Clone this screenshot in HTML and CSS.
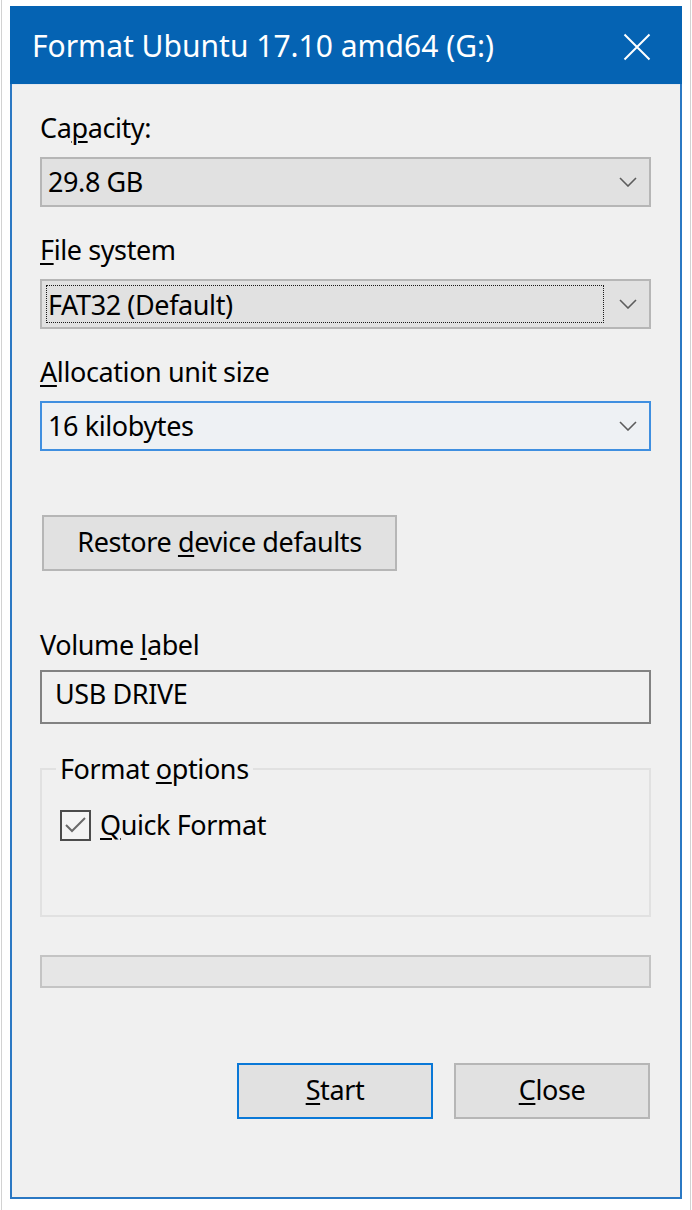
FILE: index.html
```html
<!DOCTYPE html>
<html>
<head>
<meta charset="utf-8">
<link rel="stylesheet" href="styles.css">
</head>
<body>
<div class="screen">
  <div class="window">
    <div class="titlebar">
      <span class="title">Format Ubuntu 17.10 amd64 (G:)</span>
      <svg class="close" width="28" height="28" viewBox="0 0 28 28"><path d="M1.5 1.5L26.5 26.5M26.5 1.5L1.5 26.5" stroke="#fff" stroke-width="2" fill="none"/></svg>
    </div>
    <div class="body">
      <div class="label first">Ca<u>p</u>acity:</div>
      <div class="combo">
        <span class="value">29.8 GB</span>
        <svg class="chev" width="18" height="10" viewBox="0 0 18 10"><path d="M1 1L9 9L17 1" stroke="#5c5c5c" stroke-width="1.6" fill="none"/></svg>
      </div>
      <div class="label"><u>F</u>ile system</div>
      <div class="combo">
        <span class="value focus">FAT32 (Default)</span>
        <svg class="chev" width="18" height="10" viewBox="0 0 18 10"><path d="M1 1L9 9L17 1" stroke="#5c5c5c" stroke-width="1.6" fill="none"/></svg>
      </div>
      <div class="label"><u>A</u>llocation unit size</div>
      <div class="combo hover">
        <span class="value">16 kilobytes</span>
        <svg class="chev" width="18" height="10" viewBox="0 0 18 10"><path d="M1 1L9 9L17 1" stroke="#5c5c5c" stroke-width="1.6" fill="none"/></svg>
      </div>
      <button class="btn restore">Restore <u>d</u>evice defaults</button>
      <div class="label vol">Volume <u>l</u>abel</div>
      <div class="textbox">USB DRIVE</div>
      <fieldset class="group">
        <legend>Format <u>o</u>ptions</legend>
        <div class="check-row">
          <span class="checkbox"><svg width="23" height="18" viewBox="0 0 23 18"><path d="M2 9L8 15L21 2" stroke="#6a6a6a" stroke-width="2" fill="none"/></svg></span>
          <span class="check-label"><u>Q</u>uick Format</span>
        </div>
      </fieldset>
      <div class="progress"></div>
      <div class="actions">
        <button class="btn action default"><u>S</u>tart</button>
        <button class="btn action"><u>C</u>lose</button>
      </div>
    </div>
  </div>
</div>
</body>
</html>
```

FILE: styles.css
```css
html, body {
  margin: 0;
  padding: 0;
  background: #ffffff;
}

body {
  font-family: "Noto Sans", "Open Sans", sans-serif;
  color: #000;
}

.screen {
  margin: 0 1px;
  height: 1210px;
  box-sizing: border-box;
  border-left: 1px solid #d2d2d2;
  border-right: 1px solid #d2d2d2;
  padding: 6px 0 0 8px;
}

.window {
  width: 672px;
  height: 1193px;
  box-sizing: border-box;
  border: 2px solid #2b78c3;
  border-top: none;
  background: #f0f0f0;
  display: flex;
  flex-direction: column;
}

.titlebar {
  height: 78px;
  box-sizing: border-box;
  margin: 0 -2px;
  background: #0563b3;
  display: flex;
  align-items: flex-start;
  padding: 20px 31px 0 22px;
}

.title {
  flex: 1;
  color: #fff;
  font-size: 30px;
  line-height: 40px;
  white-space: nowrap;
}

.close {
  margin-top: 7px;
}

.body {
  flex: 1;
  padding: 0 29px 0 28px;
  display: flex;
  flex-direction: column;
  font-size: 27px;
  letter-spacing: -0.4px;
  border-top: 1px solid #e4e8ee;
}

u {
  text-decoration: underline;
  text-decoration-thickness: 2px;
  text-underline-offset: 3px;
}

.label {
  line-height: 32px;
  height: 32px;
  margin-top: 27px;
  white-space: nowrap;
}

.combo {
  margin-top: 13px;
  height: 50px;
  box-sizing: border-box;
  border: 2px solid #b6b6b6;
  background: #e1e1e1;
  display: flex;
  align-items: center;
  padding: 0 12px 0 4px;
}

.combo .value {
  flex: 1;
  line-height: 32px;
  padding: 2px 0 2px 1px;
  margin-right: 15px;
  border: 1px solid transparent;
  white-space: nowrap;
}

.combo .value.focus {
  border: 1px dotted #1a1a1a;
  padding-top: 3px;
  padding-bottom: 1px;
}

.combo.hover {
  border-color: #3f8fe0;
  background: #eef1f4;
}

.chev {
  flex: none;
}

.btn {
  font-family: inherit;
  font-size: 27px;
  letter-spacing: -0.4px;
  color: #000;
  background: #e1e1e1;
  border: 2px solid #b6b6b6;
  box-sizing: border-box;
  padding: 0;
  line-height: 32px;
  white-space: nowrap;
}

.restore {
  align-self: flex-start;
  margin-top: 64px;
  margin-left: 2px;
  width: 355px;
  height: 56px;
  padding-bottom: 2px;
}

.label.vol {
  margin-top: 58px;
}

.textbox {
  margin-top: 9px;
  height: 54px;
  box-sizing: border-box;
  border: 2px solid #828282;
  background: #f0f0f0;
  padding: 6px 0 0 13px;
  line-height: 32px;
}

.group {
  margin: 29px 0 0 0;
  padding: 0 0 74px 0;
  border: 2px solid #e1e1e1;
  min-width: 0;
}

.group legend {
  margin-left: 14px;
  padding: 0 4px;
  line-height: 32px;
}

.check-row {
  margin-top: 24px;
  display: flex;
  align-items: center;
  padding-left: 18px;
  height: 32px;
}

.checkbox {
  width: 31px;
  height: 31px;
  box-sizing: border-box;
  border: 2px solid #4c4c4c;
  display: flex;
  align-items: center;
  justify-content: center;
  background: #f4f4f4;
}

.check-label {
  margin-left: 9px;
  line-height: 32px;
}

.progress {
  margin-top: 38px;
  height: 33px;
  box-sizing: border-box;
  border: 2px solid #c4c4c4;
  background: #e6e6e6;
}

.actions {
  margin-top: 75px;
  display: flex;
  justify-content: flex-end;
  gap: 21px;
  padding-right: 1px;
}

.action {
  width: 196px;
  height: 56px;
  padding-bottom: 2px;
}

.action.default {
  border: 2px solid #0a78d7;
}
```
